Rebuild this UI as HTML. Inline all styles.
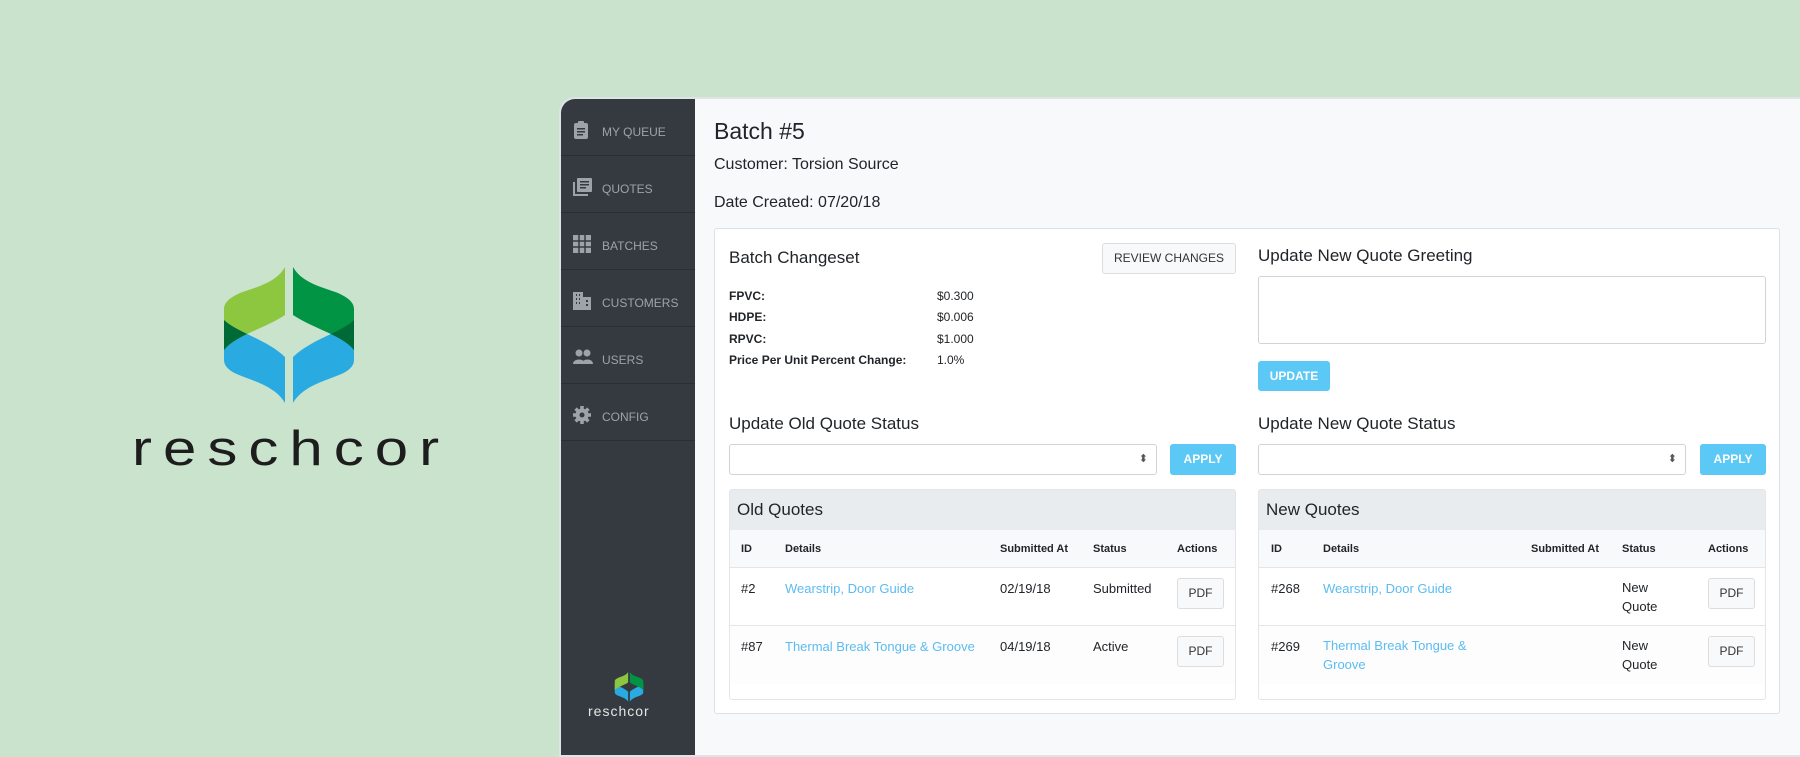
<!DOCTYPE html>
<html><head><meta charset="utf-8"><style>
*{box-sizing:border-box;margin:0;padding:0}
body{width:1800px;height:736px;background:#cae3cd;position:relative;overflow:hidden;font-family:"Liberation Sans",sans-serif;color:#212529}
.a{position:absolute;white-space:nowrap}
#win{position:absolute;left:559px;top:97px;width:1250px;height:660px;background:#f8f9fa;border:2px solid #dfe3e6;border-top-left-radius:16px;overflow:hidden}
#side{position:absolute;left:0;top:0;width:134px;height:100%;background:#343a40}
.it{position:absolute;left:0;width:134px;height:57px;border-bottom:1px solid #2a2f34;color:#9da3a8;font-size:12px}
.it span{position:absolute;left:41px;top:26px}
.it svg{position:absolute;left:12px;top:22px}
.card{position:absolute;left:714px;top:228px;width:1066px;height:486px;background:#fff;border:1px solid #dee2e6;border-radius:3px}
.btn{position:absolute;border:1px solid #ddd;background:#f8f9fa;border-radius:3px;font-size:12px;color:#333;text-align:center}
.blue{position:absolute;background:#5bc8f5;color:#fff;font-weight:bold;font-size:12px;text-align:center;border-radius:3px}
.ta{position:absolute;border:1px solid #ced4da;border-radius:3px;background:#fff}
.sel{position:absolute;border:1px solid #ced4da;border-radius:3px;background:#fff}
.sel:after{content:"⬍";position:absolute;right:8px;top:7px;font-size:11px;color:#555}
.h{font-size:17px;color:#212529}
.b{font-size:12px;font-weight:bold}
.pan{position:absolute;top:260px;height:211px;border:1px solid #e3e6e9;border-radius:3px;background:#fff;overflow:hidden}
.pan .hd{position:absolute;left:0;top:0;right:0;height:40px;background:#e9ecef;font-size:17px;padding:10px 0 0 7px}
.pan .th{position:absolute;left:0;top:40px;right:0;height:38px;background:#f8f9fa;border-bottom:1px solid #e3e6e9}
.pan .r1{position:absolute;left:0;top:78px;right:0;height:58px;border-bottom:1px solid #e3e6e9}
.pan .r2{position:absolute;left:0;top:136px;right:0;height:58px;background:#fdfdfd}
.t{font-size:13px}
.lk{color:#5bbcf0;font-size:13px}
.tb{font-size:11px;font-weight:bold}
</style></head><body>
<svg class="a" style="left:224px;top:267px" width="130" height="137" viewBox="0 0 130 137">
<defs>
<path id="gl" d="M61,0 C52,16 32,20 16,26 C5,31 0,36 0,42 L0,83 C12,68 40,62 61,48 Z"/>
<path id="bl" d="M0,53 C14,66 42,72 61,90 L61,136 C52,120 30,114 15,108 C5,104 0,99 0,93 Z"/>
<clipPath id="cb"><use href="#bl"/><use href="#bl" transform="translate(130,0) scale(-1,1)"/></clipPath>
</defs>
<use href="#bl" fill="#29abe2"/><use href="#bl" fill="#29abe2" transform="translate(130,0) scale(-1,1)"/>
<use href="#gl" fill="#8dc63f"/><use href="#gl" fill="#009444" transform="translate(130,0) scale(-1,1)"/>
<g clip-path="url(#cb)"><use href="#gl" fill="#006a37"/><use href="#gl" fill="#006a37" transform="translate(130,0) scale(-1,1)"/></g>
</svg>
<div class="a" style="left:132px;top:420px;font-size:60px;letter-spacing:11px;color:#1d1d1d;transform:scaleY(0.82);transform-origin:top left">reschcor</div>

<div id="win">
<div id="side">
<div class="it" style="top:0"><svg width="16" height="18" viewBox="0 0 16 18"><rect x="1" y="2" width="14" height="16" rx="2" fill="#9da3a8"/><rect x="5" y="0" width="6" height="4" rx="1" fill="#9da3a8"/><rect x="4" y="7" width="8" height="1.5" fill="#343a40"/><rect x="4" y="10" width="8" height="1.5" fill="#343a40"/><rect x="4" y="13" width="6" height="1.5" fill="#343a40"/></svg><span>MY QUEUE</span></div>
<div class="it" style="top:57px"><svg width="19" height="18" viewBox="0 0 19 18"><rect x="4" y="0" width="15" height="14" rx="1" fill="#9da3a8"/><rect x="7" y="3" width="9" height="1.5" fill="#343a40"/><rect x="7" y="6" width="9" height="1.5" fill="#343a40"/><rect x="7" y="9" width="6" height="1.5" fill="#343a40"/><path d="M1 4 V17 H15" stroke="#9da3a8" stroke-width="2" fill="none"/></svg><span>QUOTES</span></div>
<div class="it" style="top:114px"><svg width="18" height="18" viewBox="0 0 18 18"><rect x="0" y="0" width="18" height="18" fill="#9da3a8"/><path d="M6 0V18M12 0V18M0 6H18M0 12H18" stroke="#343a40" stroke-width="1.5"/></svg><span>BATCHES</span></div>
<div class="it" style="top:171px"><svg width="18" height="18" viewBox="0 0 18 18"><rect x="0" y="0" width="10" height="18" fill="#9da3a8"/><rect x="10" y="5" width="8" height="13" fill="#9da3a8"/><path d="M3 3h1M6 3h1M3 7h1M6 7h1M3 11h1M6 11h1M13 9h2M13 13h2" stroke="#343a40" stroke-width="2"/></svg><span>CUSTOMERS</span></div>
<div class="it" style="top:228px"><svg width="20" height="16" viewBox="0 0 20 16"><circle cx="6" cy="4" r="3.5" fill="#9da3a8"/><circle cx="14" cy="4" r="3.5" fill="#9da3a8"/><path d="M0 15C0 9 12 9 12 15ZM9 15C9 9 20 9 20 15Z" fill="#9da3a8"/></svg><span>USERS</span></div>
<div class="it" style="top:285px"><svg width="18" height="18" viewBox="0 0 18 18"><circle cx="9" cy="9" r="6.5" fill="#9da3a8"/><path d="M9 0V18M0 9H18M2.6 2.6L15.4 15.4M15.4 2.6L2.6 15.4" stroke="#9da3a8" stroke-width="3.5"/><circle cx="9" cy="9" r="2.5" fill="#343a40"/></svg><span>CONFIG</span></div>
<svg class="a" style="left:53px;top:573px" width="30" height="30" viewBox="0 0 130 137"><use href="#bl" fill="#29abe2"/><use href="#bl" fill="#29abe2" transform="translate(130,0) scale(-1,1)"/><use href="#gl" fill="#8dc63f"/><use href="#gl" fill="#009444" transform="translate(130,0) scale(-1,1)"/></svg>
<div class="a" style="left:27px;top:604px;font-size:14px;color:#e5e5e5;letter-spacing:1px">reschcor</div>
</div>
</div>

<div class="a" style="left:714px;top:118px;font-size:23px">Batch #5</div>
<div class="a" style="left:714px;top:156px;font-size:16px">Customer: Torsion Source</div>
<div class="a" style="left:714px;top:194px;font-size:16px">Date Created: 07/20/18</div>

<div class="card"></div>
<div class="a h" style="left:729px;top:248px">Batch Changeset</div>
<div class="btn" style="left:1102px;top:243px;width:134px;height:31px;line-height:29px">REVIEW CHANGES</div>
<div class="a b" style="left:729px;top:289px">FPVC:</div><div class="a t" style="left:937px;top:289px;font-size:12px">$0.300</div>
<div class="a b" style="left:729px;top:310px">HDPE:</div><div class="a t" style="left:937px;top:310px;font-size:12px">$0.006</div>
<div class="a b" style="left:729px;top:332px">RPVC:</div><div class="a t" style="left:937px;top:332px;font-size:12px">$1.000</div>
<div class="a b" style="left:729px;top:353px">Price Per Unit Percent Change:</div><div class="a t" style="left:937px;top:353px;font-size:12px">1.0%</div>

<div class="a h" style="left:1258px;top:246px">Update New Quote Greeting</div>
<div class="ta" style="left:1258px;top:276px;width:508px;height:68px"></div>
<div class="blue" style="left:1258px;top:361px;width:72px;height:30px;line-height:30px">UPDATE</div>

<div class="a h" style="left:729px;top:414px">Update Old Quote Status</div>
<div class="sel" style="left:729px;top:444px;width:428px;height:31px"></div>
<div class="blue" style="left:1170px;top:444px;width:66px;height:31px;line-height:31px">APPLY</div>
<div class="a h" style="left:1258px;top:414px">Update New Quote Status</div>
<div class="sel" style="left:1258px;top:444px;width:428px;height:31px"></div>
<div class="blue" style="left:1700px;top:444px;width:66px;height:31px;line-height:31px">APPLY</div>

<div class="pan" style="left:729px;top:489px;width:507px"><div class="hd">Old Quotes</div><div class="th"></div><div class="r1"></div><div class="r2"></div>
<div class="a tb" style="left:11px;top:53px">ID</div><div class="a tb" style="left:55px;top:53px">Details</div><div class="a tb" style="left:270px;top:53px">Submitted At</div><div class="a tb" style="left:363px;top:53px">Status</div><div class="a tb" style="left:447px;top:53px">Actions</div>
<div class="a t" style="left:11px;top:91px">#2</div><div class="a lk" style="left:55px;top:91px">Wearstrip, Door Guide</div><div class="a t" style="left:270px;top:91px">02/19/18</div><div class="a t" style="left:363px;top:91px">Submitted</div><div class="btn" style="left:447px;top:88px;width:47px;height:31px;line-height:29px">PDF</div>
<div class="a t" style="left:11px;top:149px">#87</div><div class="a lk" style="left:55px;top:149px">Thermal Break Tongue &amp; Groove</div><div class="a t" style="left:270px;top:149px">04/19/18</div><div class="a t" style="left:363px;top:149px">Active</div><div class="btn" style="left:447px;top:146px;width:47px;height:31px;line-height:29px">PDF</div>
</div>

<div class="pan" style="left:1258px;top:489px;width:508px"><div class="hd">New Quotes</div><div class="th"></div><div class="r1"></div><div class="r2"></div>
<div class="a tb" style="left:12px;top:53px">ID</div><div class="a tb" style="left:64px;top:53px">Details</div><div class="a tb" style="left:272px;top:53px">Submitted At</div><div class="a tb" style="left:363px;top:53px">Status</div><div class="a tb" style="left:449px;top:53px">Actions</div>
<div class="a t" style="left:12px;top:91px">#268</div><div class="a lk" style="left:64px;top:91px">Wearstrip, Door Guide</div><div class="a t" style="left:363px;top:88px;line-height:19px;white-space:normal;width:40px">New Quote</div><div class="btn" style="left:449px;top:88px;width:47px;height:31px;line-height:29px">PDF</div>
<div class="a t" style="left:12px;top:149px">#269</div><div class="a lk" style="left:64px;top:146px;line-height:19px;white-space:normal;width:150px">Thermal Break Tongue &amp; Groove</div><div class="a t" style="left:363px;top:146px;line-height:19px;white-space:normal;width:40px">New Quote</div><div class="btn" style="left:449px;top:146px;width:47px;height:31px;line-height:29px">PDF</div>
</div>
</body></html>
